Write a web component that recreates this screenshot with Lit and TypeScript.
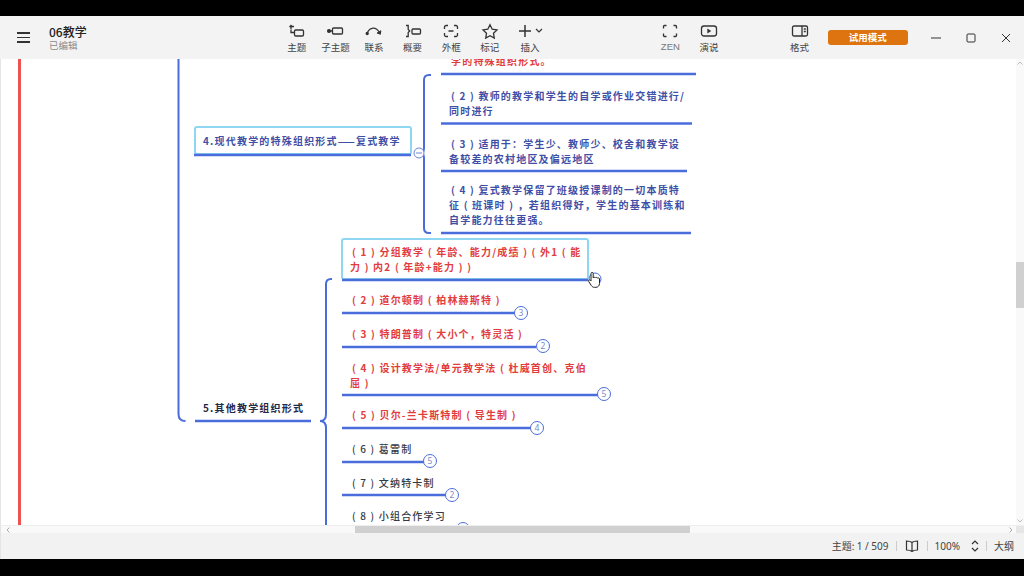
import { LitElement, html, css, svg } from "lit";
import { customElement } from "lit/decorators.js";

const BLUE = "#4a6ddb";
type Node = { x: number; y: number; c: string; t: string };

const NODES: Node[] = [
  { x: 449, y: 53, c: "red", t: "学的特殊组织形式。" },
  { x: 449, y: 88, c: "blue", t: "( 2 ) 教师的教学和学生的自学或作业交错进行/\n同时进行" },
  { x: 449, y: 136, c: "blue", t: "( 3 ) 适用于：学生少、教师少、校舍和教学设\n备较差的农村地区及偏远地区" },
  { x: 449, y: 182, c: "blue", t: "( 4 ) 复式教学保留了班级授课制的一切本质特\n征 ( 班课时 ) ，若组织得好，学生的基本训练和\n自学能力往往更强。" },
  { x: 350, y: 244, c: "red", t: "( 1 ) 分组教学 ( 年龄、能力/成绩 ) ( 外1 ( 能\n力 ) 内2 ( 年龄+能力 ) )" },
  { x: 350, y: 292, c: "red", t: "( 2 ) 道尔顿制 ( 柏林赫斯特 )" },
  { x: 350, y: 326, c: "red", t: "( 3 ) 特朗普制 ( 大小个，特灵活 )" },
  { x: 350, y: 360, c: "red", t: "( 4 ) 设计教学法/单元教学法 ( 杜威首创、克伯\n屈 )" },
  { x: 350, y: 407, c: "red", t: "( 5 ) 贝尔-兰卡斯特制 ( 导生制 )" },
  { x: 350, y: 441, c: "dark", t: "( 6 ) 葛雷制" },
  { x: 350, y: 475, c: "dark", t: "( 7 ) 文纳特卡制" },
  { x: 350, y: 508, c: "dark", t: "( 8 ) 小组合作学习" },
  { x: 203, y: 400, c: "navy", t: "5.其他教学组织形式" },
];

const LINES = [
  [441, 74, 696], [441, 123.5, 692], [441, 171, 687], [441, 233, 691],
  [195, 421, 311], [342, 280, 588], [194, 155, 411], [342, 313, 515], [342, 347, 536],
  [342, 395, 598], [342, 428, 531], [342, 462, 424], [342, 495, 446],
];
const BADGES: [number, number, string][] = [
  [521, 313, "3"], [543, 346, "2"], [604, 394, "5"], [537, 428, "4"],
  [430, 461, "5"], [452, 495, "2"], [463, 529, ""],
];

const icon = (p: unknown, w = 18) => html`<svg width=${w} height="16" viewBox="0 0 ${w} 16" fill="none" stroke="#333" stroke-width="1.3">${p}</svg>`;

const TOOLS = [
  ["主题", svg`<path d="M3 6V2.500M1.500 4 3 2.500 4.500 4M3 3.500h3"/><path d="M3 6.500v3h3"/><rect x="6.500" y="7" width="9" height="6" rx="1.200"/>`],
  ["子主题", svg`<circle cx="3" cy="8" r="1.400" fill="#333"/><path d="M4 8h2"/><rect x="6.500" y="5" width="10" height="6" rx="1"/>`],
  ["联系", svg`<path d="M2 10.500C5 3.500 11 3.500 14.500 9.500"/><path d="M12 9.800l3.200 1 .5-3.200" fill="#333"/><circle cx="2.200" cy="10.500" r="1" fill="#333"/>`],
  ["概要", svg`<path d="M2 2.500h2.200v4l1.500 1.500-1.500 1.500v4H2"/><rect x="8" y="6" width="8.500" height="5" rx="1"/>`],
  ["外框", svg`<path d="M6 2.500H4A1.500 1.500 0 0 0 2.500 4v2M12 2.500h2A1.500 1.500 0 0 1 15.500 4v2M6 13.500H4A1.500 1.500 0 0 1 2.500 12v-2M12 13.500h2a1.500 1.500 0 0 0 1.500-1.500v-2M6.500 8h5"/>`],
  ["标记", svg`<path d="M9 1.800l2.200 4.400 4.800.7-3.500 3.400.8 4.800L9 12.800l-4.300 2.300.8-4.800L2 6.900l4.800-.7z"/>`],
];

@customElement("app-root")
export class AppRoot extends LitElement {
  static styles = css`
    :host { display: flex; flex-direction: column; width: 1024px; height: 576px; background: #000; padding: 16px 0 17px; box-sizing: border-box; font-family: "Noto Sans CJK SC", "Noto Sans", sans-serif; overflow: hidden; }
    .bar { height: 43px; background: #f3f3f3; display: flex; align-items: center; flex: none; }
    .menu { margin-left: 17px; width: 13px; display: flex; flex-direction: column; gap: 3px; flex: none; }
    .menu i { display: block; height: 1.500px; background: #333; }
    .doc { margin-left: 19px; width: 228.500px; flex: none; }
    .doc b { display: block; font-weight: 500; font-size: 12px; line-height: 15px; color: #222; }
    .doc span { display: block; font-size: 9.500px; line-height: 12px; color: #8a8a8a; }
    .tool { width: 38.600px; flex: none; display: flex; flex-direction: column; align-items: center; gap: 2px; padding-top: 1px; font-size: 9.500px; line-height: 12px; color: #444; }
    .tool.ins { width: 42px; }
    .tool .row { height: 16px; display: flex; align-items: center; gap: 3px; }
    .zen { margin-left: 100px; }
    .fmt { margin-left: 52px; }
    .zen span { font-family: "Liberation Sans", sans-serif; letter-spacing: 0; color: #777; }
    .trial { margin-left: 9px; width: 80px; height: 15px; border-radius: 3px; background: #dd7410; color: #fff; font-size: 9.500px; font-weight: 700; line-height: 15px; text-align: center; flex: none; }
    .win { margin-left: 10.500px; display: flex; flex: none; }
    .win div { width: 35px; display: flex; justify-content: center; }
    .canvas { flex: 1; position: relative; background: #fff; overflow: hidden; border-left: 1px solid #e4e4e4; }
    .stage { position: absolute; left: -1px; top: -59px; width: 1024px; height: 600px; }
    .stage svg { position: absolute; left: 0; top: 0; }
    .node { position: absolute; white-space: pre; font-size: 10px; font-weight: 700; line-height: 15px; letter-spacing: 1.200px; text-indent: 2px; }
    .red { color: #e23c3c; }
    .blue { color: #3f4fa6; }
    .dark { color: #333a44; font-weight: 500; }
    .navy { color: #1e2a4a; text-indent: 0; }
    .frame { position: absolute; box-sizing: border-box; border: 2px solid #8ed6f2; border-radius: 3px; background: #fff; }
    .f4 { left: 194px; top: 126px; width: 218px; height: 29px; }
    .f1 { left: 341px; top: 238px; width: 248px; height: 42px; }
    .n4 { left: 203px; top: 133px; color: #3f4fa6; text-indent: 0; }
    .vbar { position: absolute; right: 0; top: 0; bottom: 0; width: 8px; background: #f9f9f9; }
    .vthumb { position: absolute; left: 0; top: 203px; width: 8px; height: 46px; background: #d0d0d0; }
    .arrow { position: absolute; left: 1px; }
    .h { height: 8px; flex: none; background: #f9f9f9; position: relative; border-left: 1px solid #e4e4e4; border-top: 1px solid #eee; box-sizing: border-box; }
    .hthumb { position: absolute; left: 354px; top: 0; bottom: 0; width: 335px; background: #d0d0d0; }
    .hl { position: absolute; left: 5px; top: 1px; }
    .hr { position: absolute; right: 11px; top: 1px; }
    .corner { position: absolute; right: 0; top: 0; bottom: 0; width: 8px; background: #e6e6e6; }
    .status { height: 26px; flex: none; background: #f2f2f2; border-left: 1px solid #e4e4e4; display: flex; align-items: center; justify-content: flex-end; padding-right: 10px; font-size: 10px; color: #444; box-sizing: border-box; }
    .status span { line-height: 14px; }
    .sep { width: 1px; height: 10px; background: #ccc; margin: 0 7px; }
    .book { margin: 0 1px; }
    .updown { margin-left: 11px; }
    .lat { font-family: "Noto Sans", sans-serif; }
  `;

  private connectors() {
    return svg`
      <g fill="none" stroke=${BLUE} stroke-width="2">
        <path d="M178.500 59V414q0 7 7 7" />
        <path d="M431 75h-2q-5 0-5 5V148q0 5-4 5 4 0 4 5V228q0 5 5 5h2" />
        <path d="M332 279h-1q-5 0-5 5V414q0 7-6 7 6 0 6 7V530" />
      </g>
      <g fill="none" stroke=${BLUE} stroke-width="2.500">
        ${LINES.map(([a, y, b]) => svg`<line x1=${a} y1=${y} x2=${b} y2=${y} />`)}
      </g>
      <line x1="19.500" y1="59" x2="19.500" y2="525" stroke="#ec5454" stroke-width="3" />
      <g>
        ${BADGES.map(([x, y, t]) => svg`
          <circle cx=${x} cy=${y} r="6.500" fill="#fff" stroke=${BLUE} stroke-width="1" />
          <text x=${x} y=${y + 3} text-anchor="middle" font-size="8.500" fill="#7b8bc4" font-family="Noto Sans, sans-serif">${t}</text>`)}
      </g>
      <circle cx="419" cy="153" r="5" fill="#fff" stroke="#6b84d8" stroke-width="1" />
      <line x1="416" y1="153" x2="422" y2="153" stroke="#6b84d8" stroke-width="1" />
    `;
  }

  render() {
    return html`
      <div class="bar">
        <div class="menu"><i></i><i></i><i></i></div>
        <div class="doc"><b>06教学</b><span>已编辑</span></div>
        ${TOOLS.map(([l, p]) => html`<div class="tool"><div class="row">${icon(p)}</div><span>${l}</span></div>`)}
        <div class="tool ins">
          <div class="row">
            ${icon(svg`<path d="M7 2v12M1 8h12" stroke-width="1.500"/>`, 14)}
            <svg width="8" height="6" viewBox="0 0 8 6" fill="none" stroke="#333" stroke-width="1.200"><path d="M1 1l3 3 3-3"/></svg>
          </div>
          <span>插入</span>
        </div>
        <div class="tool zen">
          <div class="row">${icon(svg`<path d="M5.500 2.500H3.500a1 1 0 0 0-1 1v2M12.500 2.500h2a1 1 0 0 1 1 1v2M5.500 13.500H3.500a1 1 0 0 1-1-1v-2M12.500 13.500h2a1 1 0 0 0 1-1v-2"/>`)}</div>
          <span>ZEN</span>
        </div>
        <div class="tool">
          <div class="row">${icon(svg`<rect x="1.500" y="3" width="15" height="10" rx="2.500"/><path d="M7.300 5.500v5l4-2.500z" fill="#333" stroke="none"/>`)}</div>
          <span>演说</span>
        </div>
        <div class="tool fmt">
          <div class="row">${icon(svg`<rect x="1.500" y="3" width="15" height="10" rx="1.500"/><path d="M11 3v10M12.800 6h2M12.800 8.500h2"/>`)}</div>
          <span>格式</span>
        </div>
        <div class="trial">试用模式</div>
        <div class="win">
          <div><svg width="10" height="10" viewBox="0 0 10 10" stroke="#333"><path d="M0 5h10"/></svg></div>
          <div><svg width="10" height="10" viewBox="0 0 10 10" fill="none" stroke="#333"><rect x="1" y="1" width="8" height="8" rx="1"/></svg></div>
          <div><svg width="10" height="10" viewBox="0 0 10 10" stroke="#333"><path d="M1 1l8 8M9 1l-8 8"/></svg></div>
        </div>
      </div>

      <div class="canvas">
        <div class="stage">
          <div class="frame f4"></div>
          <div class="frame f1"></div>
          <svg width="1024" height="600">${this.connectors()}</svg>
          <div class="node n4">4.现代教学的特殊组织形式——复式教学</div>
          ${NODES.map((n) => html`<div class="node ${n.c}" style="left:${n.x}px;top:${n.y}px">${n.t}</div>`)}
          <svg width="1024" height="600">
            <circle cx="595" cy="279" r="6" fill="#fff" stroke=${BLUE} />
            <path d="M591 273.500c0-1.500 2.200-1.500 2.200 0v4.500c.3-1 2-1 2.200 0 .3-.8 2-.8 2.200.2.400-.6 1.900-.4 1.900.7v4.600c0 2-1.500 3.800-3.500 3.800h-1.500c-1.500 0-2.400-.6-3.200-1.800l-2.600-4c-.8-1.300.8-2.200 1.700-1.200l.6.7z" fill="#fff" stroke="#222" stroke-width="1" />
          </svg>
        </div>
        <div class="vbar">
          <svg class="arrow" style="top:2px" width="6" height="4" viewBox="0 0 6 4" fill="none" stroke="#bbb"><path d="M.5 3.500 3 1l2.500 2.500"/></svg>
          <div class="vthumb"></div>
          <svg class="arrow" style="bottom:2px" width="6" height="4" viewBox="0 0 6 4" fill="none" stroke="#bbb"><path d="M.5.500 3 3 5.500.500"/></svg>
        </div>
      </div>
      <div class="h">
        <svg class="hl" width="4" height="6" viewBox="0 0 4 6" fill="none" stroke="#aaa"><path d="M3.500.5 1 3l2.500 2.500"/></svg>
        <div class="hthumb"></div>
        <svg class="hr" width="4" height="6" viewBox="0 0 4 6" fill="none" stroke="#aaa"><path d="M.5.500 3 3 .5 5.500"/></svg>
        <div class="corner"></div>
      </div>
      <div class="status">
        <span>主题: <span class="lat">1 / 509</span></span>
        <div class="sep"></div>
        <svg class="book" width="14" height="12" viewBox="0 0 14 12" fill="none" stroke="#333" stroke-width="1.200"><path d="M7 2.500C6 1.500 4 1 1.500 1v9c2.500 0 4.500.5 5.500 1.500 1-1 3-1.500 5.500-1.500V1C10 1 8 1.500 7 2.500zM7 2.500v9"/></svg>
        <div class="sep"></div>
        <span class="lat">100%</span>
        <svg class="updown" width="8" height="14" viewBox="0 0 8 14" fill="none" stroke="#333" stroke-width="1.200"><path d="M1 5l3-3 3 3M1 9l3 3 3-3"/></svg>
        <div class="sep"></div>
        <span>大纲</span>
      </div>
    `;
  }
}
